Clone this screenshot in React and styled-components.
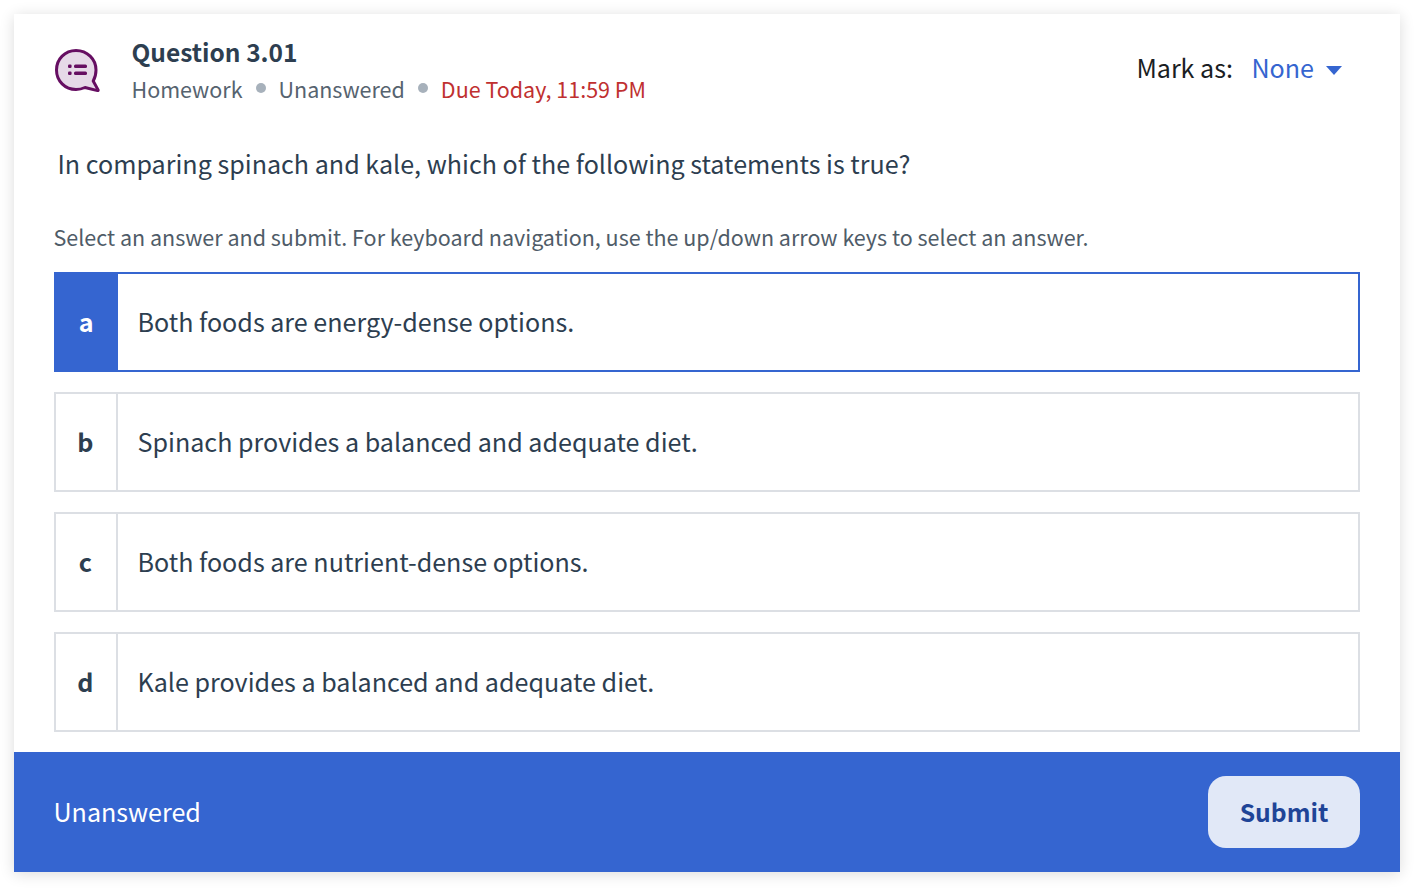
import React from 'react';
import styled, {createGlobalStyle} from 'styled-components';

const Global = createGlobalStyle`
    html, body{
        margin: 0;
        padding: 0;
        background: #fff;
    }
    body{
        font-family: "Noto Sans CJK SC", "Noto Sans", sans-serif;
    }
`;

const Page = styled.div`
    width: 1418px;
    height: 890px;
    padding: 14px 18px 18px 14px;
    box-sizing: border-box;
    overflow: hidden;
`;

const Card = styled.div`
    height: 858px;
    display: flex;
    flex-direction: column;
    background: #fff;
    box-shadow: 0 2px 14px rgba(0, 0, 0, .14);
`;

const Header = styled.div`
    display: flex;
    justify-content: space-between;
    padding: 20px 58px 0 40px;
    height: 98px;
    box-sizing: border-box;
`;

const HeaderLeft = styled.div`
    display: flex;
`;

const IconBox = styled.div`
    width: 46px;
    height: 46px;
    margin: 14px 31.5px 0 0;
`;

const Title = styled.div`
    font-size: 24.5px;
    line-height: 36px;
    font-weight: 700;
    color: #2d3e50;
`;

const Meta = styled.div`
    display: flex;
    align-items: center;
    height: 36px;
    font-size: 21.5px;
    color: #56636f;
`;

const Dot = styled.span`
    width: 10px;
    height: 10px;
    margin: 0 13px;
    border-radius: 50%;
    background: #a7b1bb;
`;

const Due = styled.span`
    color: #c03030;
`;

const MarkAs = styled.div`
    display: flex;
    align-items: center;
    height: 66px;
    font-size: 25.1px;
    color: #1a1e23;
`;

const MarkValue = styled.span`
    margin-left: 18.5px;
    color: #3565d0;
`;

const Caret = styled.span`
    width: 0;
    height: 0;
    margin: 7px 0 0 12px;
    border-left: 8.5px solid transparent;
    border-right: 8.5px solid transparent;
    border-top: 9px solid #3565d0;
`;

const Body = styled.div`
    flex: 1;
    padding: 0 40px;
`;

const Question = styled.div`
    margin: 31px 0 0 3.5px;
    font-size: 25.1px;
    line-height: 40px;
    color: #2d3e50;
`;

const Hint = styled.div`
    margin: 37px 0 0 -.5px;
    font-size: 21.5px;
    line-height: 34px;
    color: #4f5c68;
`;

const Options = styled.div`
    display: flex;
    flex-direction: column;
    gap: 20px;
    margin-top: 18px;
`;

const Option = styled.div`
    display: flex;
    height: 100px;
    box-sizing: border-box;
    border: 2px solid ${p => p.$selected ? '#3565d0' : '#dcdfe4'};
    font-size: 25.1px;
    color: #2d3e50;
`;

const Letter = styled.div`
    display: flex;
    align-items: center;
    justify-content: center;
    width: 62px;
    padding: 0 1.5px 2px 0;
    box-sizing: border-box;
    border-right: 2px solid #dcdfe4;
    font-weight: 700;
    ${p => p.$selected && `
        border-right: 0;
        background: #3565d0;
        color: #fff;
    `}
`;

const OptionText = styled.div`
    display: flex;
    align-items: center;
    padding: 0 0 2px 19.5px;
`;

const Footer = styled.div`
    display: flex;
    align-items: center;
    justify-content: space-between;
    height: 120px;
    padding: 0 40px 0 39.5px;
    box-sizing: border-box;
    background: #3565d0;
    color: #fff;
    font-size: 25.1px;
`;

const FooterLabel = styled.span`
    padding-bottom: 2px;
`;

const SubmitBtn = styled.button`
    width: 152px;
    height: 72px;
    padding: 0 0 2px;
    border: 0;
    border-radius: 18px;
    background: #e1e8f7;
    color: #1f4497;
    font-family: inherit;
    font-size: 24.7px;
    font-weight: 700;
`;

const options = [
    {key: 'a', text: 'Both foods are energy-dense options.', selected: true},
    {key: 'b', text: 'Spinach provides a balanced and adequate diet.'},
    {key: 'c', text: 'Both foods are nutrient-dense options.'},
    {key: 'd', text: 'Kale provides a balanced and adequate diet.'},
];

const QuestionIcon = () => (
    <svg width="46" height="46" viewBox="0 0 46 46">
        <path
            d="M22 2.500C11 2.500 2.500 11 2.500 22S11 41.500 22 41.500c3.600 0 6.400-.8 9-2l12.500 3.100c.5.1.8-.3.6-.7L39.200 33C41.100 29.800 42 26 42 22 42 11 33.100 2.500 22 2.500z"
            fill="#e6d9e8"
            stroke="#660e62"
            strokeWidth="3"
            strokeLinejoin="round"
        />
        <rect x="14" y="16.500" width="3.600" height="3.400" rx="1.200" fill="#660e62"/>
        <rect x="14" y="23.500" width="3.600" height="3.400" rx="1.200" fill="#660e62"/>
        <rect x="20" y="16.500" width="13" height="3.400" rx="1.500" fill="#660e62"/>
        <rect x="20" y="23.500" width="13" height="3.400" rx="1.500" fill="#660e62"/>
    </svg>
);

export default function App() {
    return (
        <Page>
            <Global/>
            <Card>
                <Header>
                    <HeaderLeft>
                        <IconBox><QuestionIcon/></IconBox>
                        <div>
                            <Title>Question 3.01</Title>
                            <Meta>
                                Homework<Dot/>Unanswered<Dot/><Due>Due Today, 11:59 PM</Due>
                            </Meta>
                        </div>
                    </HeaderLeft>
                    <MarkAs>
                        Mark as:
                        <MarkValue>None</MarkValue>
                        <Caret/>
                    </MarkAs>
                </Header>
                <Body>
                    <Question>In comparing spinach and kale, which of the following statements is true?</Question>
                    <Hint>Select an answer and submit. For keyboard navigation, use the up/down arrow keys to select an answer.</Hint>
                    <Options>
                        {options.map(val => (
                            <Option key={val.key} $selected={val.selected}>
                                <Letter $selected={val.selected}>{val.key}</Letter>
                                <OptionText>{val.text}</OptionText>
                            </Option>
                        ))}
                    </Options>
                </Body>
                <Footer>
                    <FooterLabel>Unanswered</FooterLabel>
                    <SubmitBtn>Submit</SubmitBtn>
                </Footer>
            </Card>
        </Page>
    );
}
